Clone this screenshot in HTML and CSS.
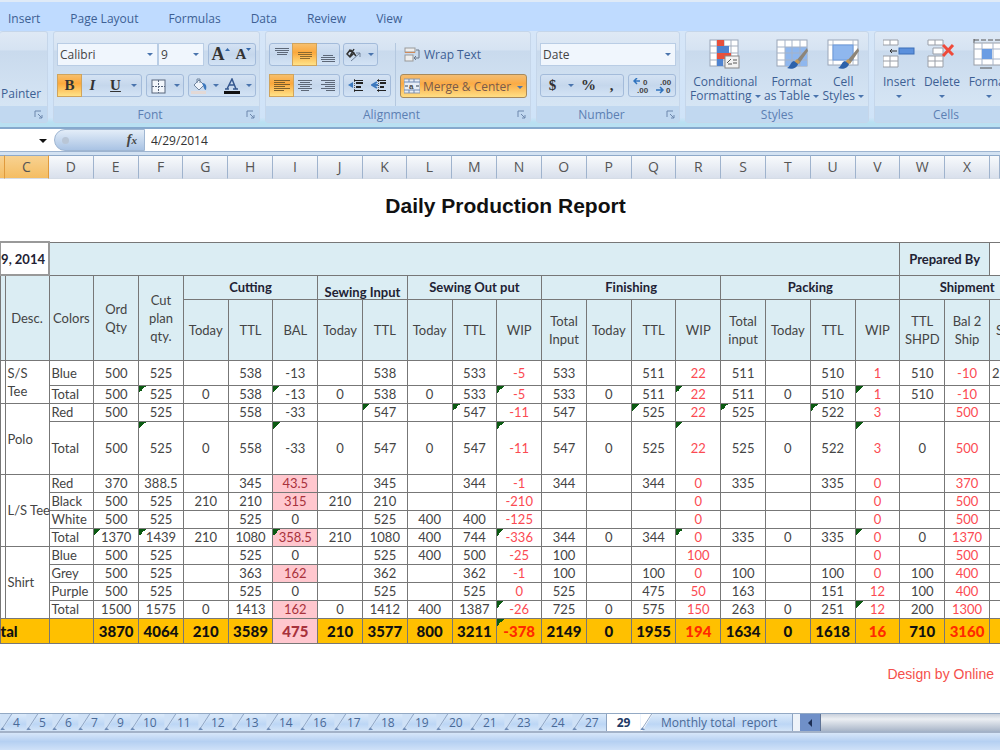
FILE: index.html
```html
<!DOCTYPE html>
<html lang="en">
<head>
<meta charset="UTF-8" />
<meta name="viewport" content="width=device-width, initial-scale=1.0">
<title>Daily Production Report</title>
<link rel="stylesheet" href="styles.css">
</head>
<body>

  <nav class="menu">
    <button>Insert</button>
    <button>Page Layout</button>
    <button>Formulas</button>
    <button>Data</button>
    <button>Review</button>
    <button>View</button>
  </nav>

  <div class="ribbon">
    <section class="group group-clipboard">
      <div class="group-body"><button class="painter">Painter</button></div>
      <div class="group-label"><span></span><button class="launcher" aria-label="Clipboard options"><svg viewBox="0 0 9 9"><path d="M1 7V1h6M4 4l4 4M8 5v3H5"/></svg></button></div>
    </section>

    <section class="group group-font">
      <div class="group-body rows">
        <div class="row">
          <div class="combos">
            <label class="combo combo-font"><select aria-label="Font"><option>Calibri</option></select></label>
            <label class="combo combo-size"><select aria-label="Font size"><option>9</option></select></label>
          </div>
          <div class="set">
            <button class="serif grow" aria-label="Grow font">A<svg viewBox="0 0 5 3"><path d="M0 3L2.500 0L5 3z"/></svg></button>
            <button class="serif shrink" aria-label="Shrink font">A<svg viewBox="0 0 5 3"><path d="M0 0L2.500 3L5 0z"/></svg></button>
          </div>
        </div>
        <div class="row">
          <div class="set set-biu">
            <button class="serif on">B</button>
            <button class="serif italic">I</button>
            <button class="serif under">U</button>
            <button class="drop" aria-label="Underline styles"></button>
          </div>
          <div class="set">
            <button aria-label="Borders"><svg class="ic" viewBox="0 0 16 16"><rect x="1" y="2" width="13" height="13" fill="#f2f6fb" stroke="#59677d"/><path d="M7.500 2v13M1 8.500h13" stroke="#59677d" stroke-dasharray="2 1"/></svg></button>
            <button class="drop" aria-label="Border styles"></button>
          </div>
          <div class="set">
            <button class="slim" aria-label="Fill colour"><svg class="ic" viewBox="0 0 16 16"><rect x="0" y="13" width="15" height="3" fill="#e3d9d6"/><path d="M3 7l5-5 5 5-5 5z" fill="#eef3fa" stroke="#71859f"/><path d="M6 5V1h3v4" fill="none" stroke="#71859f"/><path d="M11 5c4 0 5 3 4 7-2 0-2-3-4-7z" fill="#3c78bd"/></svg></button>
            <button class="drop" aria-label="Fill colours"></button>
            <button class="slim" aria-label="Font colour"><svg class="ic" viewBox="0 0 16 16"><rect x="0" y="13" width="16" height="3" fill="#111"/><path d="M3 11L8 1l4 10M5 7h6M1 11h4M9 11h5" fill="none" stroke="#36588f" stroke-width="1.500"/></svg></button>
            <button class="drop" aria-label="Font colours"></button>
          </div>
        </div>
      </div>
      <div class="group-label"><span>Font</span><button class="launcher" aria-label="Font options"><svg viewBox="0 0 9 9"><path d="M1 7V1h6M4 4l4 4M8 5v3H5"/></svg></button></div>
    </section>

    <section class="group group-align">
      <div class="group-body split">
        <div class="rows">
          <div class="row">
            <div class="set">
              <button aria-label="Top align"><svg class="ic" viewBox="0 0 16 16"><path d="M1 1.500h14M1 3.500h14M3 5.500h11M3 7.500h10" stroke="#5d6878"/></svg></button>
              <button class="on" aria-label="Middle align"><svg class="ic" viewBox="0 0 16 16"><path d="M1 5.500h14M1 7.500h14M3 9.500h12M3 11.500h10" stroke="#8a6a30"/></svg></button>
              <button aria-label="Bottom align"><svg class="ic" viewBox="0 0 16 16"><path d="M3 8.500h10M1 10.500h14M1 12.500h14M2 14.500h13" stroke="#5d6878"/></svg></button>
            </div>
            <div class="set">
              <button class="slim" aria-label="Orientation"><svg class="ic" viewBox="0 0 16 16"><path d="M1 7l3-4 4 3-4 4zM5 3l5 6M8 2l-4 7" fill="none" stroke="#333" stroke-width="1.500"/><path d="M5 14L14 6M10 6h4v4" fill="none" stroke="#70819a"/></svg></button>
              <button class="drop" aria-label="Orientation list"></button>
            </div>
          </div>
          <div class="row">
            <div class="set">
              <button class="on" aria-label="Align left"><svg class="ic" viewBox="0 0 16 16"><path d="M0 2.500h16M0 4.500h11M0 6.500h16M0 8.500h11M0 10.500h16M0 12.500h10" stroke="#7d602c"/></svg></button>
              <button aria-label="Align centre"><svg class="ic" viewBox="0 0 16 16"><path d="M1 2.500h14M3 4.500h10M1 6.500h14M3 8.500h10M1 10.500h14M4 12.500h8" stroke="#5d6878"/></svg></button>
              <button aria-label="Align right"><svg class="ic" viewBox="0 0 16 16"><path d="M1 2.500h14M5 4.500h10M1 6.500h14M5 8.500h10M1 10.500h14M6 12.500h9" stroke="#5d6878"/></svg></button>
            </div>
            <div class="set">
              <button aria-label="Decrease indent"><svg class="ic" viewBox="0 0 16 16"><path d="M6 2.500h9M6 12.500h9" stroke="#222"/><path d="M8 5h7M8 9h5" stroke="#222" stroke-width="2"/><path d="M6.500 1v14" stroke="#555" stroke-dasharray="1 1"/><path d="M5 4v6L0 7z" fill="#3c78bd"/></svg></button>
              <button aria-label="Increase indent"><svg class="ic" viewBox="0 0 16 16"><path d="M6 2.500h9M6 12.500h9" stroke="#222"/><path d="M9 5h6M9 9h4" stroke="#222" stroke-width="2"/><path d="M7.500 1v14" stroke="#555" stroke-dasharray="1 1"/><path d="M6 4L1 7l5 3M1 7h6" fill="none" stroke="#3c78bd" stroke-width="2"/></svg></button>
            </div>
          </div>
        </div>
        <div class="rows rows-wide">
          <button class="wide"><svg class="ic" viewBox="0 0 16 16"><rect x="1" y="1" width="10" height="4" fill="#eee" stroke="#999"/><rect x="1" y="8" width="8" height="6" fill="#eee" stroke="#999"/><path d="M1 5.500h10" stroke="#d08a5a"/><path d="M12 3h3v8h-5M12 9l-2 2 2 2" fill="none" stroke="#6a7688"/></svg>Wrap Text</button>
          <div class="merge">
            <button class="wide"><svg class="ic" viewBox="0 0 16 16"><rect x="0" y="1" width="16" height="14" fill="#e8eef7" stroke="#8f99a8"/><path d="M5 1v3M10 1v3M5 12v3M10 12v3M0 4h16M0 12h16" stroke="#6f89b3"/><text x="5" y="11" class="tiny">a</text><path d="M1 8h3M12 8h3" stroke="#345"/></svg>Merge &amp; Center</button>
            <button class="drop" aria-label="Merge options"></button>
          </div>
        </div>
      </div>
      <div class="group-label"><span>Alignment</span><button class="launcher" aria-label="Alignment options"><svg viewBox="0 0 9 9"><path d="M1 7V1h6M4 4l4 4M8 5v3H5"/></svg></button></div>
    </section>

    <section class="group group-number">
      <div class="group-body rows">
        <label class="combo"><select aria-label="Number format"><option>Date</option></select></label>
        <div class="row">
          <div class="set set-money">
            <button class="serif">$</button>
            <button class="drop" aria-label="Currencies"></button>
            <button class="serif">%</button>
            <button class="serif">,</button>
          </div>
          <div class="set">
            <button aria-label="Increase decimal"><svg class="ic" viewBox="0 0 16 16"><path d="M1 3h6M4 0L1 3l3 3" fill="none" stroke="#2f73be" stroke-width="1.500"/><text x="10" y="7" class="tiny">0</text><text x="4" y="15" class="tiny">.00</text></svg></button>
            <button aria-label="Decrease decimal"><svg class="ic" viewBox="0 0 16 16"><path d="M0 12h7M4 9l3 3-3 3" fill="none" stroke="#2f73be" stroke-width="1.500"/><text x="4" y="7" class="tiny">.00</text><text x="10" y="15" class="tiny">0</text></svg></button>
          </div>
        </div>
      </div>
      <div class="group-label"><span>Number</span><button class="launcher" aria-label="Number options"><svg viewBox="0 0 9 9"><path d="M1 7V1h6M4 4l4 4M8 5v3H5"/></svg></button></div>
    </section>

    <section class="group group-styles">
      <div class="group-body bigs">
        <button class="big"><svg viewBox="0 0 32 32"><rect x="1" y="1" width="28" height="26" fill="#fff" stroke="#9aa6b8"/><path d="M1 7h28M1 14h28M1 21h28M8 1v26M15 1v26M22 1v26" stroke="#a5afbf"/><path d="M8 1h7v6H8zM8 14h14v6H8z" fill="#e8503c"/><path d="M8 7h12v7H8zM8 20h6v7H8z" fill="#4f83d0"/><rect x="16" y="17" width="14" height="12" fill="#f2f2f2" stroke="#888"/><path d="M18 24l4-4M19 25h4M24 21h4M24 24h4" stroke="#555"/></svg>Conditional<span>Formatting <i class="arrow"></i></span></button>
        <button class="big"><svg viewBox="0 0 32 32"><rect x="1" y="1" width="30" height="26" fill="#fff" stroke="#9aa6b8"/><path d="M9 8h22v19H9z" fill="#8fb7ee"/><path d="M1 8h30M1 14h30M1 21h30M9 1v26M16 1v26M24 1v26" stroke="#a5b3c8"/><path d="M31 9L20 22l3 3 9-13z" fill="#8d8578"/><path d="M21 20l-3 3 3 3 3-3z" fill="#c79b58"/><path d="M18 22c-4 1-3 5-7 7 5 2 10 0 11-4z" fill="#2d62aa"/></svg>Format<span>as Table <i class="arrow"></i></span></button>
        <button class="big"><svg viewBox="0 0 32 32"><rect x="1" y="1" width="30" height="25" fill="#fff" stroke="#9aa6b8"/><path d="M1 6h30M1 21h30M6 1v25M26 1v25" stroke="#b0bccd"/><rect x="6" y="6" width="20" height="15" fill="#8fb7ee" stroke="#6d9adc"/><path d="M31 9L20 22l3 3 9-13z" fill="#8d8578"/><path d="M21 20l-3 3 3 3 3-3z" fill="#c79b58"/><path d="M18 22c-4 1-3 5-7 7 5 2 10 0 11-4z" fill="#2d62aa"/></svg>Cell<span>Styles <i class="arrow"></i></span></button>
      </div>
      <div class="group-label"><span>Styles</span></div>
    </section>

    <section class="group group-cells">
      <div class="group-body bigs">
        <button class="big"><svg viewBox="0 0 32 32"><path d="M0 1h15v5H0zM0 17h15v11H0zM7 1v5M7 17v11M0 22h15" fill="#fff" stroke="#9a9fa8"/><rect x="16" y="9" width="15" height="6" fill="#5b90dc" stroke="#3d6fb8"/><path d="M14 12H7M9 10l-2 2 2 2" fill="none" stroke="#333"/></svg>Insert<span><i class="arrow"></i></span></button>
        <button class="big"><svg viewBox="0 0 32 32"><path d="M2 1h15v5H2zM2 17h15v11H2zM9 1v5M9 17v11M2 22h15M7 9h10v6H7z" fill="#fff" stroke="#9a9fa8"/><path d="M17 6l10 10M27 6L17 17" stroke="#ef4a3a" stroke-width="3"/></svg>Delete<span><i class="arrow"></i></span></button>
        <button class="big"><svg viewBox="0 0 32 32"><path d="M1 4V0M1 1h28M29 4V0" stroke="#555" stroke-dasharray="5 2"/><rect x="1" y="4" width="28" height="22" fill="#fff" stroke="#9a9fa8"/><path d="M1 10h28M1 20h28M9 4v22M20 4v22" stroke="#a5b3c8"/><rect x="9" y="10" width="10" height="10" fill="#6b9de3"/><path d="M7 29h12" stroke="#555"/></svg>Format<span><i class="arrow"></i></span></button>
      </div>
      <div class="group-label"><span>Cells</span></div>
    </section>
  </div>

  <div class="formula-bar">
    <button class="name-box" aria-label="Name box"><i class="arrow dark"></i></button>
    <div class="fx-area"><span class="knob"></span><button class="fx">f<small>x</small></button></div>
    <input class="formula" aria-label="Formula" value="4/29/2014">
  </div>

  <div class="columns">
    <span class="sel"></span><span class="sel">C</span><span>D</span><span>E</span><span>F</span><span>G</span><span>H</span><span>I</span><span>J</span><span>K</span><span>L</span><span>M</span><span>N</span><span>O</span><span>P</span><span>Q</span><span>R</span><span>S</span><span>T</span><span>U</span><span>V</span><span>W</span><span>X</span><span></span>
  </div>

  <main class="sheet">
    <h1>Daily Production Report</h1>

    <table class="report">
      <colgroup>
        <col class="col-b"><col class="col-c"><col span="21"><col class="col-y">
      </colgroup>
      <thead>
        <tr class="h-date">
          <td class="date" colspan="2">9, 2014</td>
          <th colspan="19"></th>
          <th colspan="2">Prepared By</th>
          <td></td>
        </tr>
        <tr class="h-group">
          <th rowspan="2"></th>
          <th class="sub" rowspan="2">Desc.</th>
          <th class="sub" rowspan="2">Colors</th>
          <th class="sub" rowspan="2">Ord Qty</th>
          <th class="sub" rowspan="2">Cut plan qty.</th>
          <th colspan="3">Cutting</th>
          <th class="low" colspan="2">Sewing Input</th>
          <th colspan="3">Sewing Out put</th>
          <th colspan="4">Finishing</th>
          <th colspan="4">Packing</th>
          <th colspan="3">Shipment</th>
        </tr>
        <tr class="h-sub">
          <th class="sub">Today</th><th class="sub">TTL</th><th class="sub">BAL</th>
          <th class="sub">Today</th><th class="sub">TTL</th>
          <th class="sub">Today</th><th class="sub">TTL</th><th class="sub">WIP</th>
          <th class="sub">Total Input</th><th class="sub">Today</th><th class="sub">TTL</th><th class="sub">WIP</th>
          <th class="sub">Total input</th><th class="sub">Today</th><th class="sub">TTL</th><th class="sub">WIP</th>
          <th class="sub">TTL SHPD</th><th class="sub">Bal 2 Ship</th><th class="sub cut">S</th>
        </tr>
      </thead>
      <tbody>
        <tr class="r-mid"><td rowspan="2"></td><td class="l desc" rowspan="2">S/S<br>Tee</td><td class="l">Blue</td><td>500</td><td>525</td><td></td><td>538</td><td>-13</td><td></td><td>538</td><td></td><td>533</td><td class="red">-5</td><td>533</td><td></td><td>511</td><td class="red">22</td><td>511</td><td></td><td>510</td><td class="red">1</td><td>510</td><td class="red">-10</td><td class="l">2</td></tr>
        <tr><td class="l">Total</td><td>500</td><td class="flag">525</td><td>0</td><td>538</td><td class="flag">-13</td><td>0</td><td>538</td><td>0</td><td>533</td><td class="red flag">-5</td><td>533</td><td>0</td><td>511</td><td class="red flag">22</td><td>511</td><td>0</td><td>510</td><td class="red flag">1</td><td>510</td><td class="red">-10</td><td></td></tr>
        <tr><td rowspan="2"></td><td class="l" rowspan="2">Polo</td><td class="l">Red</td><td>500</td><td>525</td><td></td><td>558</td><td>-33</td><td></td><td class="flag">547</td><td></td><td class="flag">547</td><td class="red">-11</td><td>547</td><td></td><td class="flag">525</td><td class="red">22</td><td class="flag">525</td><td></td><td class="flag">522</td><td class="red">3</td><td></td><td class="red">500</td><td></td></tr>
        <tr class="r-tall"><td class="l">Total</td><td>500</td><td class="flag">525</td><td>0</td><td>558</td><td class="flag">-33</td><td>0</td><td>547</td><td>0</td><td>547</td><td class="red flag">-11</td><td>547</td><td>0</td><td>525</td><td class="red flag">22</td><td>525</td><td>0</td><td>522</td><td class="red flag">3</td><td>0</td><td class="red">500</td><td></td></tr>
        <tr><td rowspan="4"></td><td class="l" rowspan="4">L/S Tee</td><td class="l">Red</td><td>370</td><td>388.5</td><td></td><td>345</td><td class="bad">43.5</td><td></td><td>345</td><td></td><td>344</td><td class="red">-1</td><td>344</td><td></td><td>344</td><td class="red">0</td><td>335</td><td></td><td>335</td><td class="red">0</td><td></td><td class="red">370</td><td></td></tr>
        <tr><td class="l">Black</td><td>500</td><td>525</td><td>210</td><td>210</td><td class="bad">315</td><td>210</td><td>210</td><td></td><td></td><td class="red">-210</td><td></td><td></td><td></td><td class="red">0</td><td></td><td></td><td></td><td class="red">0</td><td></td><td class="red">500</td><td></td></tr>
        <tr><td class="l">White</td><td>500</td><td>525</td><td></td><td>525</td><td>0</td><td></td><td>525</td><td>400</td><td>400</td><td class="red">-125</td><td></td><td></td><td></td><td class="red">0</td><td></td><td></td><td></td><td class="red">0</td><td></td><td class="red">500</td><td></td></tr>
        <tr><td class="l">Total</td><td class="flag">1370</td><td class="flag">1439</td><td>210</td><td>1080</td><td class="bad flag">358.5</td><td>210</td><td>1080</td><td>400</td><td>744</td><td class="red flag">-336</td><td>344</td><td>0</td><td>344</td><td class="red flag">0</td><td>335</td><td>0</td><td>335</td><td class="red flag">0</td><td>0</td><td class="red">1370</td><td></td></tr>
        <tr><td rowspan="4"></td><td class="l" rowspan="4">Shirt</td><td class="l">Blue</td><td>500</td><td>525</td><td></td><td>525</td><td>0</td><td></td><td>525</td><td>400</td><td>500</td><td class="red">-25</td><td>100</td><td></td><td></td><td class="red">100</td><td></td><td></td><td></td><td class="red">0</td><td></td><td class="red">500</td><td></td></tr>
        <tr><td class="l">Grey</td><td>500</td><td>525</td><td></td><td>363</td><td class="bad">162</td><td></td><td>362</td><td></td><td>362</td><td class="red">-1</td><td>100</td><td></td><td>100</td><td class="red">0</td><td>100</td><td></td><td>100</td><td class="red">0</td><td>100</td><td class="red">400</td><td></td></tr>
        <tr><td class="l">Purple</td><td>500</td><td>525</td><td></td><td>525</td><td>0</td><td></td><td>525</td><td></td><td>525</td><td class="red">0</td><td>525</td><td></td><td>475</td><td class="red">50</td><td>163</td><td></td><td>151</td><td class="red">12</td><td>100</td><td class="red">400</td><td></td></tr>
        <tr><td class="l">Total</td><td>1500</td><td>1575</td><td>0</td><td>1413</td><td class="bad">162</td><td>0</td><td>1412</td><td>400</td><td>1387</td><td class="red flag">-26</td><td>725</td><td>0</td><td>575</td><td class="red">150</td><td>263</td><td>0</td><td>251</td><td class="red flag">12</td><td>200</td><td class="red">1300</td><td></td></tr>
      </tbody>
      <tfoot>
        <tr><td class="grand" colspan="2">tal</td><td></td><td>3870</td><td>4064</td><td>210</td><td>3589</td><td class="bad">475</td><td>210</td><td>3577</td><td>800</td><td>3211</td><td class="red flag">-378</td><td>2149</td><td>0</td><td>1955</td><td class="red">194</td><td>1634</td><td>0</td><td>1618</td><td class="red">16</td><td>710</td><td class="red">3160</td><td></td></tr>
      </tfoot>
    </table>

    <p class="credit">Design by Online</p>
  </main>

  <footer class="tabs">
    <button class="tab">4</button>
    <button class="tab">5</button>
    <button class="tab">6</button>
    <button class="tab">7</button>
    <button class="tab">9</button>
    <button class="tab two">10</button>
    <button class="tab two">11</button>
    <button class="tab two">12</button>
    <button class="tab two">13</button>
    <button class="tab two">14</button>
    <button class="tab two">16</button>
    <button class="tab two">17</button>
    <button class="tab two">18</button>
    <button class="tab two">19</button>
    <button class="tab two">20</button>
    <button class="tab two">21</button>
    <button class="tab two">23</button>
    <button class="tab two">24</button>
    <button class="tab two">27</button>
    <button class="tab active">29</button>
    <button class="tab month">Monthly total&nbsp; report</button>
    <span class="splitter"></span>
    <button class="scroll-left" aria-label="Scroll left"><svg viewBox="0 0 6 10"><path d="M5 1v8L1 5z"/></svg></button>
    <div class="scrollbar"></div>
  </footer>
  <div class="status"></div>

<script>
  // slanted divider in front of every sheet tab
  document.querySelectorAll('.tab:not(.active)').forEach(tab => {
    tab.insertAdjacentHTML('afterbegin',
      '<svg class="slant" viewBox="0 0 13 18"><path class="fill" d="M0 0H13L2 18H0z"/><path class="line" d="M1 17L12 0"/><path class="foot" d="M0 17l2-3 3 3z"/></svg>');
  });
</script>
</body>
</html>
```
FILE: styles.css
```css
* {
  box-sizing: border-box;
}

body {
  margin: 0;
  min-height: 100vh;
  display: flex;
  flex-direction: column;
  overflow: hidden;
  background: #fff;
  font-family: "Open Sans", "Noto Sans", sans-serif;
  font-size: 12px;
  color: #3d5f94;
}

button, select, input {
  font: inherit;
  color: inherit;
  border: 0;
  margin: 0;
  padding: 0;
  background: none;
}

svg {
  display: block;
}

/* Menu tabs */
.menu {
  display: flex;
  gap: 30px;
  height: 31px;
  padding: 3px 8px 0;
  background: #bfdbff;
  border-top: 2px solid #dfeaf7;
}

.menu button {
  white-space: nowrap;
}

/* Ribbon */
.ribbon {
  display: flex;
  gap: 5px;
  height: 98px;
  padding-bottom: 4px;
  overflow: hidden;
  background: linear-gradient(#d6e6f8, #cfe3f8 90%, #b9e0f2 95%);
  border-bottom: 2px solid #86a9cd;
}

.group {
  display: flex;
  flex-direction: column;
  flex: none;
  border: 1px solid #c5d6ea;
  border-radius: 3px;
  background: linear-gradient(#dfe9f5, #d6e3f2 20%, #c9daed 21%, #d9e8f6);
}

.group-clipboard { width: 48px; border-left: 0; }
.group-font { width: 207px; }
.group-align { width: 266px; }
.group-number { width: 144px; }
.group-styles { width: 184px; }
.group-cells { width: 144px; }

.group-body {
  flex: 1;
  padding: 11px 3px 0;
}

.group-label {
  display: flex;
  align-items: center;
  height: 16px;
  background: #c1d8f0;
  color: #5c7fb3;
}

.group-label span {
  flex: 1;
  text-align: center;
}

.launcher {
  width: 13px;
}

.launcher svg {
  width: 9px;
  height: 9px;
  fill: none;
  stroke: #6c87ad;
}

.painter {
  margin-top: 42px;
}

.group-clipboard .group-body {
  padding-left: 1px;
}

.rows {
  display: flex;
  flex-direction: column;
  gap: 8px;
}

.row {
  display: flex;
  gap: 4px;
}

.combos {
  display: flex;
  flex: 1;
}

.combo {
  display: flex;
  align-items: center;
  height: 23px;
  background: #f0f6fd;
  border: 1px solid #b9cde5;
}

.combo select {
  appearance: none;
  flex: 1;
  min-width: 0;
  padding-left: 2px;
  color: #444;
}

.combo::after {
  content: "";
  margin: 0 4px 0 -10px;
  pointer-events: none;
}

.combo-font {
  flex: 1;
}

.combo-size {
  width: 46px;
}

.arrow,
.combo::after,
.drop::before {
  display: inline-block;
  border: 3px solid transparent;
  border-top-color: #4a74ad;
  border-bottom: 0;
  vertical-align: middle;
}

.arrow.dark {
  border-width: 4px;
  border-bottom: 0;
  border-top-color: #111;
}

.set {
  display: flex;
  height: 23px;
  border: 1px solid #a3bbda;
  border-radius: 3px;
  background: linear-gradient(#d4e2f3, #c5d7ec 50%, #d3e3f5);
  color: #333;
}

.set button {
  display: flex;
  align-items: center;
  justify-content: center;
  width: 23px;
}

.set-biu,
.set-money {
  flex: 1;
}

.set .slim {
  width: 20px;
}

.set .drop,
.merge .drop {
  width: 13px;
}

.drop::before {
  content: "";
}

.set .on {
  background: linear-gradient(#f7bf6c, #fba83c 40%, #ffe287);
  outline: 1px solid #d0a45c;
}

.ic {
  width: 16px;
  height: 16px;
  flex: none;
}

.tiny {
  font: bold 8px "Liberation Sans", sans-serif;
  fill: #444;
}

.serif {
  font-family: "Liberation Serif", serif;
  font-size: 15px;
  font-weight: bold;
}

.serif.italic {
  font-style: italic;
}

.serif.under {
  text-decoration: underline;
}

.serif.grow {
  font-size: 18px;
}

.serif svg {
  width: 5px;
  height: 3px;
  fill: #3467a8;
  align-self: flex-start;
  margin-top: 4px;
}

.split {
  display: flex;
  gap: 4px;
}

.split .row {
  gap: 3px;
}

.rows-wide {
  flex: 1;
  padding-left: 4px;
  border-left: 1px solid #b4c8df;
}

.wide {
  display: flex;
  align-items: center;
  gap: 4px;
  height: 23px;
  padding-left: 4px;
  white-space: nowrap;
}

.merge {
  display: flex;
  height: 24px;
  border: 1px solid #a88a5c;
  border-radius: 3px;
  background: linear-gradient(#f3bd73, #fbab45 40%, #ffdf85);
  color: #7a5a4a;
}

.merge .wide {
  flex: 1;
  gap: 3px;
  height: 22px;
  padding-left: 3px;
}

.merge .drop {
  width: 12px;
}

.bigs {
  display: flex;
  justify-content: space-between;
  padding: 7px 4px 0;
}

.big {
  display: flex;
  flex-direction: column;
  align-items: center;
  line-height: 14px;
  white-space: nowrap;
}

.big svg {
  width: 32px;
  height: 32px;
  margin-bottom: 4px;
}

.group-cells .bigs {
  padding: 7px 8px 0;
}

/* Formula bar */
.formula-bar {
  display: flex;
  height: 22px;
  background: #fff;
}

.name-box {
  width: 54px;
  padding-right: 7px;
  text-align: right;
}

.fx-area {
  display: flex;
  align-items: center;
  justify-content: space-between;
  width: 91px;
  padding: 0 7px;
  border: 1px solid #9fb6d2;
  border-radius: 11px 0 0 11px;
  background: linear-gradient(#e3edf8, #a9c3e4);
}

.knob {
  width: 7px;
  height: 7px;
  border-radius: 50%;
  background: #b9c6d6;
}

.fx {
  font: italic bold 14px "Liberation Serif", serif;
  color: #444;
}

.fx small {
  font-size: 11px;
}

.formula {
  flex: 1;
  padding-left: 6px;
  color: #333;
}

/* Column letters, same tracks as .report */
.columns {
  display: grid;
  grid-template-columns: 5px 44px repeat(21, 1fr) 10px;
  height: 27px;
  border-top: 1px solid #9db4d0;
  background: #d3e2f2;
  padding-top: 3px;
}

.columns span {
  border-top: 1px solid #8ea9c9;
  border-right: 1px solid #9fb3cd;
  border-bottom: 1px solid #d5dce6;
  background: linear-gradient(#f8fafc, #d9e0ec);
  color: #555;
  font-size: 14px;
  line-height: 22px;
  text-align: center;
}

.columns .sel {
  background: linear-gradient(#f8d291, #f4bd63);
  border-right-color: #e09a3c;
}

/* Sheet */
.sheet {
  flex: 1;
  overflow: hidden;
  font-family: Lato, sans-serif;
  font-size: 13px;
  color: #444;
}

h1 {
  margin: 15px 0 22px;
  padding-left: 11px;
  font: bold 21px/26px "Liberation Sans", Arial, sans-serif;
  text-align: center;
  color: #111;
}

/* last column runs off the window, first border sits under its left edge */
.report {
  width: calc(100% + 36px);
  margin-left: -1px;
  table-layout: fixed;
  border-collapse: collapse;
}

.col-b { width: 5px; }
.col-c { width: 44px; }
.col-y { width: 45px; }

.report th,
.report td {
  padding: 0;
  border: 1px solid #777;
  text-align: center;
  line-height: 16px;
}

.report th {
  background: #dbedf3;
  font-weight: bold;
  color: #223;
}

.report th.sub {
  font-weight: normal;
  line-height: 18px;
  color: #444;
}

.report tr { height: 18px; }
.report .h-date { height: 33px; }
.report .h-group { height: 24px; }
.report .h-sub { height: 61px; }
.report .r-mid { height: 25px; }
.report .r-tall { height: 53px; }
.report tfoot tr { height: 25px; }

.report .date {
  border: 2px solid #999;
  padding-right: 3px;
  text-align: right;
  font-weight: bold;
  color: #223;
}

.report .low {
  vertical-align: bottom;
  line-height: 14px;
}

.report .cut {
  padding-left: 6px;
  text-align: left;
}

.report .l {
  padding-left: 2px;
  text-align: left;
  white-space: nowrap;
}

.report .desc {
  line-height: 18px;
}

.report .red {
  color: #fb4a52;
}

.report .bad {
  background-color: #ffc7ce;
  color: #a8323c;
}

.report .flag {
  background-image: linear-gradient(135deg, #0b5a12 50%, transparent 50%);
  background-size: 7px 7px;
  background-repeat: no-repeat;
}

.report tfoot td {
  background-color: #ffc000;
  font-size: 15px;
  font-weight: 900;
  color: #111;
}

.report tfoot .red {
  color: #ff2a00;
}

.report tfoot .bad {
  color: #a8323c;
}

.report tfoot .grand {
  text-align: left;
}

.credit {
  margin: 21px 6px 0;
  font: 14px/18px "Liberation Sans", Arial, sans-serif;
  text-align: right;
  color: #f5504c;
}

/* Sheet tabs */
.tabs {
  display: flex;
  height: 20px;
  border-top: 1px solid #93a9c4;
  border-bottom: 2px solid #a3b2c8;
  background: #cfe0f4;
}

.tab {
  display: flex;
  flex: none;
  align-items: center;
  width: 26px;
  background: linear-gradient(#dceafa, #bcd6f5 60%, #d4e5f8);
  color: #4a6a98;
  white-space: nowrap;
}

.tab.two {
  width: 34px;
}

.slant {
  width: 13px;
  height: 17px;
  flex: none;
}

.slant .fill { fill: #cfe1f6; }
.slant .line { stroke: #8da4c2; fill: none; }
.slant .foot { fill: #6f8db8; }

.tab.active {
  width: 34px;
  justify-content: center;
  border-left: 1px solid #8da4c2;
  background: #fff;
  color: #223a66;
  font-weight: bold;
}

.tab.month {
  width: 153px;
  gap: 8px;
  border-right: 1px solid #8da4c2;
}

.tab.month .fill {
  fill: #fff;
}

.splitter {
  width: 7px;
  background: #eef3f9;
}

.scroll-left {
  width: 20px;
  padding-left: 7px;
  background: #7090c8;
}

.scroll-left svg {
  width: 6px;
  height: 10px;
  fill: #1d2f55;
}

.scrollbar {
  flex: 1;
  border-left: 1px solid #5f7396;
  background: linear-gradient(#c9d0db, #eceff3 30%, #a9b6c9);
}

.status {
  height: 17px;
  background: linear-gradient(#d7e6f9, #b5d0f2 50%, #cfe1f8);
}
```
